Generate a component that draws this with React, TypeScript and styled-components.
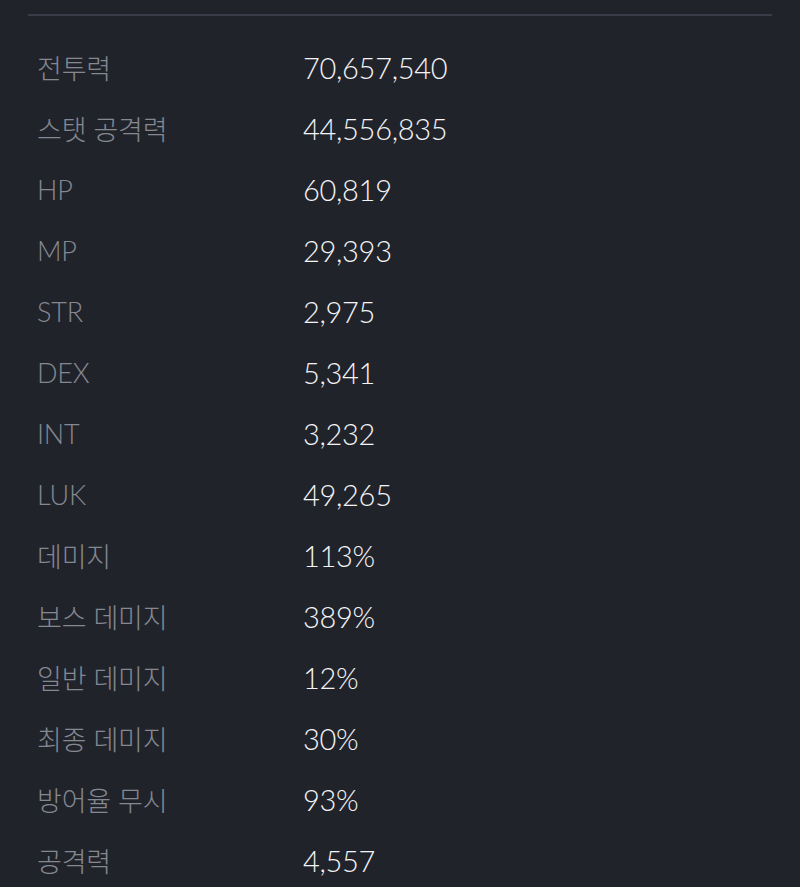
import React from 'react';
import styled, { createGlobalStyle } from 'styled-components';

interface Stat {
  label: string;
  value: string;
}

const stats: Stat[] = [
  { label: '전투력', value: '70,657,540' },
  { label: '스탯 공격력', value: '44,556,835' },
  { label: 'HP', value: '60,819' },
  { label: 'MP', value: '29,393' },
  { label: 'STR', value: '2,975' },
  { label: 'DEX', value: '5,341' },
  { label: 'INT', value: '3,232' },
  { label: 'LUK', value: '49,265' },
  { label: '데미지', value: '113%' },
  { label: '보스 데미지', value: '389%' },
  { label: '일반 데미지', value: '12%' },
  { label: '최종 데미지', value: '30%' },
  { label: '방어율 무시', value: '93%' },
  { label: '공격력', value: '4,557' },
];

const GlobalStyle = createGlobalStyle`
  html, body {
    margin: 0;
    padding: 0;
    background-color: #21232b;
  }
  body {
    font-family: 'Noto Sans CJK KR', 'Noto Sans', sans-serif;
  }
`;

const Panel = styled.div`
  height: 887px;
  overflow: hidden;
  padding: 14px 28px 0;
  box-sizing: border-box;
  background-color: #21232b;
`;

const Divider = styled.div`
  height: 2px;
  background-color: #3a3d48;
  margin-bottom: 21px;
`;

const StatList = styled.div`
  display: flex;
  flex-direction: column;
  padding-left: 9px;
`;

const Row = styled.div`
  display: grid;
  grid-template-columns: 266px 1fr;
  align-items: center;
  height: 61px;
`;

const Label = styled.span`
  color: #858891;
  font-family: 'Lato', 'Noto Sans CJK KR', sans-serif;
  font-weight: 300;
  font-size: 27px;
  letter-spacing: -0.2px;
`;

const Value = styled.span`
  color: #f4f4f6;
  font-family: 'Lato', 'Noto Sans CJK KR', sans-serif;
  font-weight: 300;
  font-size: 29px;
  letter-spacing: -0.3px;
`;

const App: React.FC = () => {
  return (
    <Panel>
      <GlobalStyle />
      <Divider />
      <StatList>
        {stats.map((s) => (
          <Row key={s.label}>
            <Label>{s.label}</Label>
            <Value>{s.value}</Value>
          </Row>
        ))}
      </StatList>
    </Panel>
  );
};

export default App;
